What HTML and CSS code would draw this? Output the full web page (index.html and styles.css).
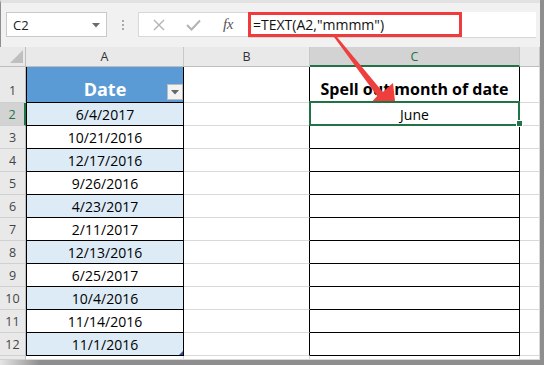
FILE: index.html
```html
<!DOCTYPE html>
<html>
<head>
<meta charset="utf-8">
<link rel="stylesheet" href="styles.css">
</head>
<body>
<div class="window">
  <div class="upper">
    <div class="main">
      <div class="toolbar">
        <div class="namebox">
          <span class="ref">C2</span>
          <svg class="nb-arrow" width="8" height="5" viewBox="0 0 8 5"><path d="M0 0H8L4 4.5Z" fill="#6b6b6b"/></svg>
        </div>
        <div class="sep"><i></i><i></i><i></i></div>
        <div class="fnbox">
          <svg width="12" height="12" viewBox="0 0 12 12"><path d="M1 1L11 11M11 1L1 11" stroke="#b3b3b3" stroke-width="1.4" fill="none"/></svg>
          <svg width="15" height="12" viewBox="0 0 15 12"><path d="M1 6L5.5 10.5L14 1.5" stroke="#b3b3b3" stroke-width="2" fill="none"/></svg>
          <span class="fx">fx</span>
        </div>
        <div class="formula"><span class="hl">=TEXT(A2,"mmmm")</span></div>
      </div>
      <div class="sheet">
        <div class="corner"><svg width="13" height="13" viewBox="0 0 13 13"><path d="M13 0V13H0Z" fill="#bfbfbf"/></svg></div>
        <div class="ch">A</div>
        <div class="ch">B</div>
        <div class="ch sel">C</div>
        <div class="ch"></div>

        <div class="rh r1">1</div>
        <div class="c a head">Date<span class="dd"><svg width="8" height="5" viewBox="0 0 8 5"><path d="M0 0H8L4 4.5Z" fill="#666"/></svg></span></div>
        <div class="c b"></div>
        <div class="c cc title">Spell out month of date</div>
        <div class="c"></div>

        <div class="rh sel">2</div>
        <div class="c a alt">6/4/2017</div>
        <div class="c b"></div>
        <div class="c cc active">June<span class="handle"></span></div>
        <div class="c"></div>

        <div class="rh">3</div>
        <div class="c a">10/21/2016</div>
        <div class="c b"></div>
        <div class="c cc"></div>
        <div class="c"></div>

        <div class="rh">4</div>
        <div class="c a alt">12/17/2016</div>
        <div class="c b"></div>
        <div class="c cc"></div>
        <div class="c"></div>

        <div class="rh">5</div>
        <div class="c a">9/26/2016</div>
        <div class="c b"></div>
        <div class="c cc"></div>
        <div class="c"></div>

        <div class="rh">6</div>
        <div class="c a alt">4/23/2017</div>
        <div class="c b"></div>
        <div class="c cc"></div>
        <div class="c"></div>

        <div class="rh">7</div>
        <div class="c a">2/11/2017</div>
        <div class="c b"></div>
        <div class="c cc"></div>
        <div class="c"></div>

        <div class="rh">8</div>
        <div class="c a alt">12/13/2016</div>
        <div class="c b"></div>
        <div class="c cc"></div>
        <div class="c"></div>

        <div class="rh">9</div>
        <div class="c a">6/25/2017</div>
        <div class="c b"></div>
        <div class="c cc"></div>
        <div class="c"></div>

        <div class="rh">10</div>
        <div class="c a alt">10/4/2016</div>
        <div class="c b"></div>
        <div class="c cc"></div>
        <div class="c"></div>

        <div class="rh">11</div>
        <div class="c a">11/14/2016</div>
        <div class="c b"></div>
        <div class="c cc"></div>
        <div class="c"></div>

        <div class="rh">12</div>
        <div class="c a alt last">11/1/2016</div>
        <div class="c b"></div>
        <div class="c cc"></div>
        <div class="c"></div>

        <div class="rh"></div>
        <div class="c"></div>
        <div class="c"></div>
        <div class="c"></div>
        <div class="c"></div>
      </div>
    </div>
    <div class="rframe"></div>
  </div>
  <div class="bframe"></div>
  <svg class="arrow" width="544" height="365" viewBox="0 0 544 365">
    <polygon points="335.6,35.2 382.8,91.9 393,83 396,110 368,106 377.2,96.1 333.8,36.8" fill="#ef3e3e"/>
  </svg>
</div>
</body>
</html>
```

FILE: styles.css
```css
html, body {
  margin: 0;
  padding: 0;
  background: #fff;
  overflow: hidden;
}

.window {
  position: relative;
  width: 544px;
  height: 365px;
  display: flex;
  flex-direction: column;
  font-family: "Open Sans", "Noto Sans", sans-serif;
}

.upper {
  display: flex;
  height: 360px;
}

.main {
  width: 540px;
  display: flex;
  flex-direction: column;
}

.rframe {
  width: 4px;
  background: #8e8e8e;
}

.bframe {
  height: 5px;
  background: linear-gradient(to right, #e6e6e6, #8e8e8e 40px);
}

/* toolbar */
.toolbar {
  box-sizing: border-box;
  height: 47px;
  background: #f1f1f1;
  border-top: 3px solid #e2e2e2;
  border-left: 1px solid #8e8e8e;
  padding: 9px 4px 0 5px;
  display: flex;
  align-items: flex-start;
}

.namebox {
  box-sizing: border-box;
  width: 101px;
  height: 25px;
  background: #fff;
  border: 1px solid #c9c9c9;
  display: flex;
  align-items: center;
  justify-content: space-between;
  padding: 0 6px 0 6px;
}

.ref {
  font-size: 13px;
  color: #222;
}

.nb-arrow {
  margin-top: 1px;
}

.sep {
  width: 2px;
  margin: 8px 14px 0 15px;
  display: flex;
  flex-direction: column;
  gap: 2px;
}

.sep i {
  display: block;
  width: 2px;
  height: 2px;
  background: #a9a9a9;
}

.fnbox {
  box-sizing: border-box;
  width: 110px;
  height: 25px;
  background: #fff;
  border: 1px solid #d8d8d8;
  border-right: none;
  display: flex;
  align-items: center;
  padding-left: 14px;
}

.fnbox svg:nth-child(2) {
  margin-left: 21px;
}

.fx {
  margin-left: 22px;
  font-family: "Liberation Serif", "DejaVu Serif", serif;
  font-style: italic;
  font-size: 15px;
  color: #555;
  letter-spacing: -0.5px;
}

.formula {
  flex: 1;
  height: 25px;
  background: #fff;
  border-bottom: 1px solid #d6d6d6;
  display: flex;
}

.hl {
  box-sizing: border-box;
  width: 214px;
  height: 25px;
  border: 3px solid #ef3b3b;
  padding-left: 2px;
  font-size: 14px;
  line-height: 19px;
  color: #111;
}

/* sheet */
.sheet {
  flex: 1;
  display: grid;
  grid-template-columns: 26px 158px 126px 210px 20px;
  grid-template-rows: 20px 36px repeat(11, 23px) 4px;
  font-size: 14px;
}

.sheet > div {
  box-sizing: border-box;
  position: relative;
  display: flex;
  align-items: center;
  justify-content: center;
}

.corner {
  background: #e9e9e9;
  border-right: 1px solid #bdbdbd;
  border-bottom: 1px solid #bdbdbd;
  align-items: flex-end !important;
  justify-content: flex-end !important;
  padding: 0 2px 3px 0;
}

.ch {
  background: #e9e9e9;
  border-right: 1px solid #c8c8c8;
  border-bottom: 1px solid #bdbdbd;
  font-size: 12.5px;
  color: #333;
}

.ch.sel {
  background: #d3d3d3;
  color: #217346;
  border-bottom: 2px solid #217346;
}

.rh {
  background: #e9e9e9;
  border-right: 1px solid #bdbdbd;
  border-bottom: 1px solid #d0d0d0;
  font-size: 12.5px;
  color: #444;
}

.rh.r1 {
  align-items: flex-end !important;
  line-height: 16px;
  padding-bottom: 3px;
}

.rh.sel {
  background: #d3d3d3;
  color: #217346;
  border-right: 2px solid #217346;
}

.c {
  background: #fff;
  border-right: 1px solid #d9d9d9;
  border-bottom: 1px solid #d9d9d9;
  color: #000;
}

.a {
  border-left: 1px solid #000;
  border-right-color: #000;
  border-bottom-color: #000;
}

.a.alt {
  background: #ddebf7;
}

.a.head {
  background: #5b9bd5;
  color: #fff;
  font-weight: 700;
  font-size: 18px;
  line-height: 20px;
  align-items: flex-end;
  padding-bottom: 3px;
}

.dd {
  position: absolute;
  right: 0;
  bottom: 2px;
  box-sizing: border-box;
  width: 16px;
  height: 16px;
  background: #f3f3f3;
  border: 1px solid #bcbcbc;
  display: flex;
  align-items: center;
  justify-content: center;
}

.a.last::after {
  content: "";
  position: absolute;
  right: 0;
  bottom: 0;
  border-left: 4px solid transparent;
  border-bottom: 4px solid #2f5597;
}

.b {
  border-right-color: #000;
}

.cc {
  border-right-color: #000;
  border-bottom-color: #000;
}

.cc.title {
  font-weight: 700;
  font-size: 16px;
  line-height: 20px;
  align-items: flex-end;
  padding-bottom: 3px;
}

.cc.active {
  z-index: 2;
}

.cc.active::after {
  content: "";
  position: absolute;
  left: -1px;
  top: -2px;
  right: -1px;
  bottom: -1px;
  border: 2px solid #217346;
}

.handle {
  position: absolute;
  right: -3px;
  bottom: -1px;
  width: 5px;
  height: 5px;
  background: #217346;
  border: 1px solid #fff;
  margin: -1px;
  z-index: 3;
}

.arrow {
  position: absolute;
  left: 0;
  top: 0;
  pointer-events: none;
}
```
